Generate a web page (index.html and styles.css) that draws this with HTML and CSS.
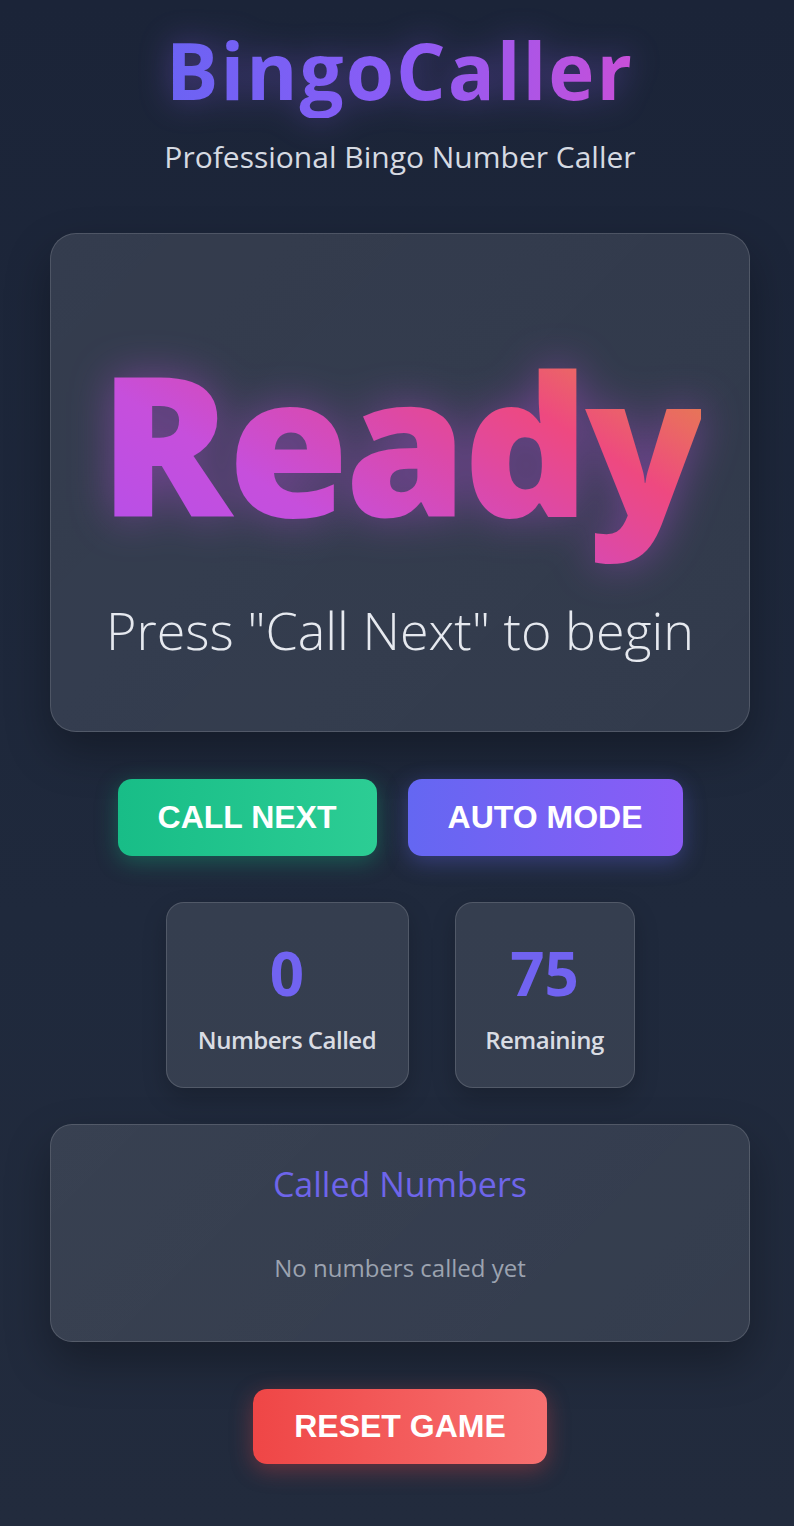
FILE: index.html
```html
<!DOCTYPE html>
<html lang="en">
<head>
<meta charset="utf-8">
<title>BingoCaller</title>
<link rel="stylesheet" href="styles.css">
</head>
<body>
<main class="app">
  <header class="header">
    <h1 class="title">BingoCaller</h1>
    <p class="subtitle">Professional Bingo Number Caller</p>
  </header>

  <section class="display card">
    <div class="display-number">Ready</div>
    <div class="display-hint">Press "Call Next" to begin</div>
  </section>

  <div class="controls">
    <button class="btn btn-call">CALL NEXT</button>
    <button class="btn btn-auto">AUTO MODE</button>
  </div>

  <div class="stats">
    <div class="stat card-sm">
      <div class="stat-value">0</div>
      <div class="stat-label">Numbers Called</div>
    </div>
    <div class="stat card-sm">
      <div class="stat-value">75</div>
      <div class="stat-label">Remaining</div>
    </div>
  </div>

  <section class="history card">
    <h2 class="history-title">Called Numbers</h2>
    <p class="history-empty">No numbers called yet</p>
  </section>

  <div class="reset-row">
    <button class="btn btn-reset">RESET GAME</button>
  </div>
</main>
</body>
</html>
```

FILE: styles.css
```css
* { box-sizing: border-box; }

html, body {
  margin: 0;
  min-height: 100%;
}

body {
  background: linear-gradient(180deg, #1b2438 0%, #1f293c 60%, #222b3d 100%);
  font-family: "Open Sans", "Noto Sans", "DejaVu Sans", sans-serif;
  color: #e5e7eb;
  padding: 0 0 40px 6px;
  min-height: 1526px;
}

.app {
  width: 700px;
  margin: 0 auto;
  display: flex;
  flex-direction: column;
  align-items: center;
}

.header {
  text-align: center;
  padding-top: 24px;
}

.title {
  margin: 0;
  font-size: 78px;
  font-weight: 700;
  line-height: 1.2;
  letter-spacing: 2px;
  background: linear-gradient(90deg, #6b63f3 0%, #8b5cf6 50%, #c94fd8 100%);
  -webkit-background-clip: text;
  background-clip: text;
  color: transparent;
  filter: drop-shadow(0 0 16px rgba(139, 92, 246, 0.4));
}

.subtitle {
  margin: 19px 0 0;
  font-size: 30px;
  line-height: 1.3;
  color: #d6dae2;
  font-weight: 400;
}

.card {
  width: 700px;
  background: linear-gradient(135deg, rgba(255,255,255,0.11), rgba(255,255,255,0.09));
  border: 1.5px solid rgba(255, 255, 255, 0.14);
  border-radius: 26px;
  box-shadow: 0 20px 45px rgba(0, 0, 0, 0.3);
}

.display {
  margin-top: 57px;
  height: 499px;
  display: flex;
  flex-direction: column;
  align-items: center;
  padding-top: 74px;
}

.display-number {
  font-size: 196px;
  font-weight: 800;
  line-height: 1.36;
  letter-spacing: -4px;
  background: linear-gradient(32deg, #b24fec 0%, #c64fdc 30%, #dc49a8 52%, #ee4980 68%, #ea6a62 80%, #d99a34 100%);
  -webkit-background-clip: text;
  background-clip: text;
  color: transparent;
  filter: drop-shadow(0 0 22px rgba(192, 80, 230, 0.45));
}

.display-hint {
  margin-top: 21px;
  font-size: 52px;
  font-weight: 300;
  color: #e6e9ef;
  line-height: 1.36;
}

.controls {
  margin-top: 47px;
  display: flex;
  gap: 31px;
}

.btn {
  border: none;
  font-family: "Liberation Sans", Arial, sans-serif;
  font-weight: 700;
  font-size: 32px;
  color: #ffffff;
  border-radius: 14px;
  padding: 20px 40px;
  line-height: 37px;
  cursor: pointer;
}

.btn-call {
  width: 259px;
  background: linear-gradient(90deg, #18bd87 0%, #2ccd94 100%);
  box-shadow: 0 6px 22px rgba(16, 185, 129, 0.35);
}

.btn-auto {
  width: 275px;
  background: linear-gradient(90deg, #6467f2 0%, #8b5cf6 100%);
  box-shadow: 0 6px 22px rgba(99, 102, 241, 0.35);
}

.stats {
  margin-top: 46px;
  display: flex;
  gap: 46px;
}

.card-sm {
  background: rgba(255, 255, 255, 0.1);
  border: 1.5px solid rgba(255, 255, 255, 0.14);
  border-radius: 18px;
  box-shadow: 0 10px 25px rgba(0, 0, 0, 0.2);
}

.stat {
  height: 186px;
  padding: 0 26px;
  display: flex;
  flex-direction: column;
  align-items: center;
  justify-content: center;
}

.stat:first-child { width: 243px; }
.stat:last-child { width: 180px; }

.stat-value {
  font-size: 60px;
  font-weight: 700;
  line-height: 1.1;
  color: #7163f1;
  margin-top: 6px;
}

.stat-label {
  margin-top: 20px;
  font-size: 24px;
  font-weight: 600;
  color: #d9dce3;
  letter-spacing: -0.5px;
  line-height: 1.2;
}

.history {
  margin-top: 36px;
  height: 218px;
  border-radius: 22px;
  display: flex;
  flex-direction: column;
  align-items: center;
  padding-top: 37px;
}

.history-title {
  margin: 0;
  font-size: 34px;
  font-weight: 400;
  color: #6e65ea;
  line-height: 1.3;
}

.history-empty {
  margin: 46px 0 0;
  font-size: 24px;
  color: #9ca3b0;
  line-height: 1.3;
}

.reset-row {
  margin-top: 47px;
  display: flex;
  justify-content: center;
}

.btn-reset {
  width: 294px;
  padding: 19px 40px;
  background: linear-gradient(90deg, #ef4646 0%, #f77070 100%);
  box-shadow: 0 6px 22px rgba(239, 68, 68, 0.35);
}
```
